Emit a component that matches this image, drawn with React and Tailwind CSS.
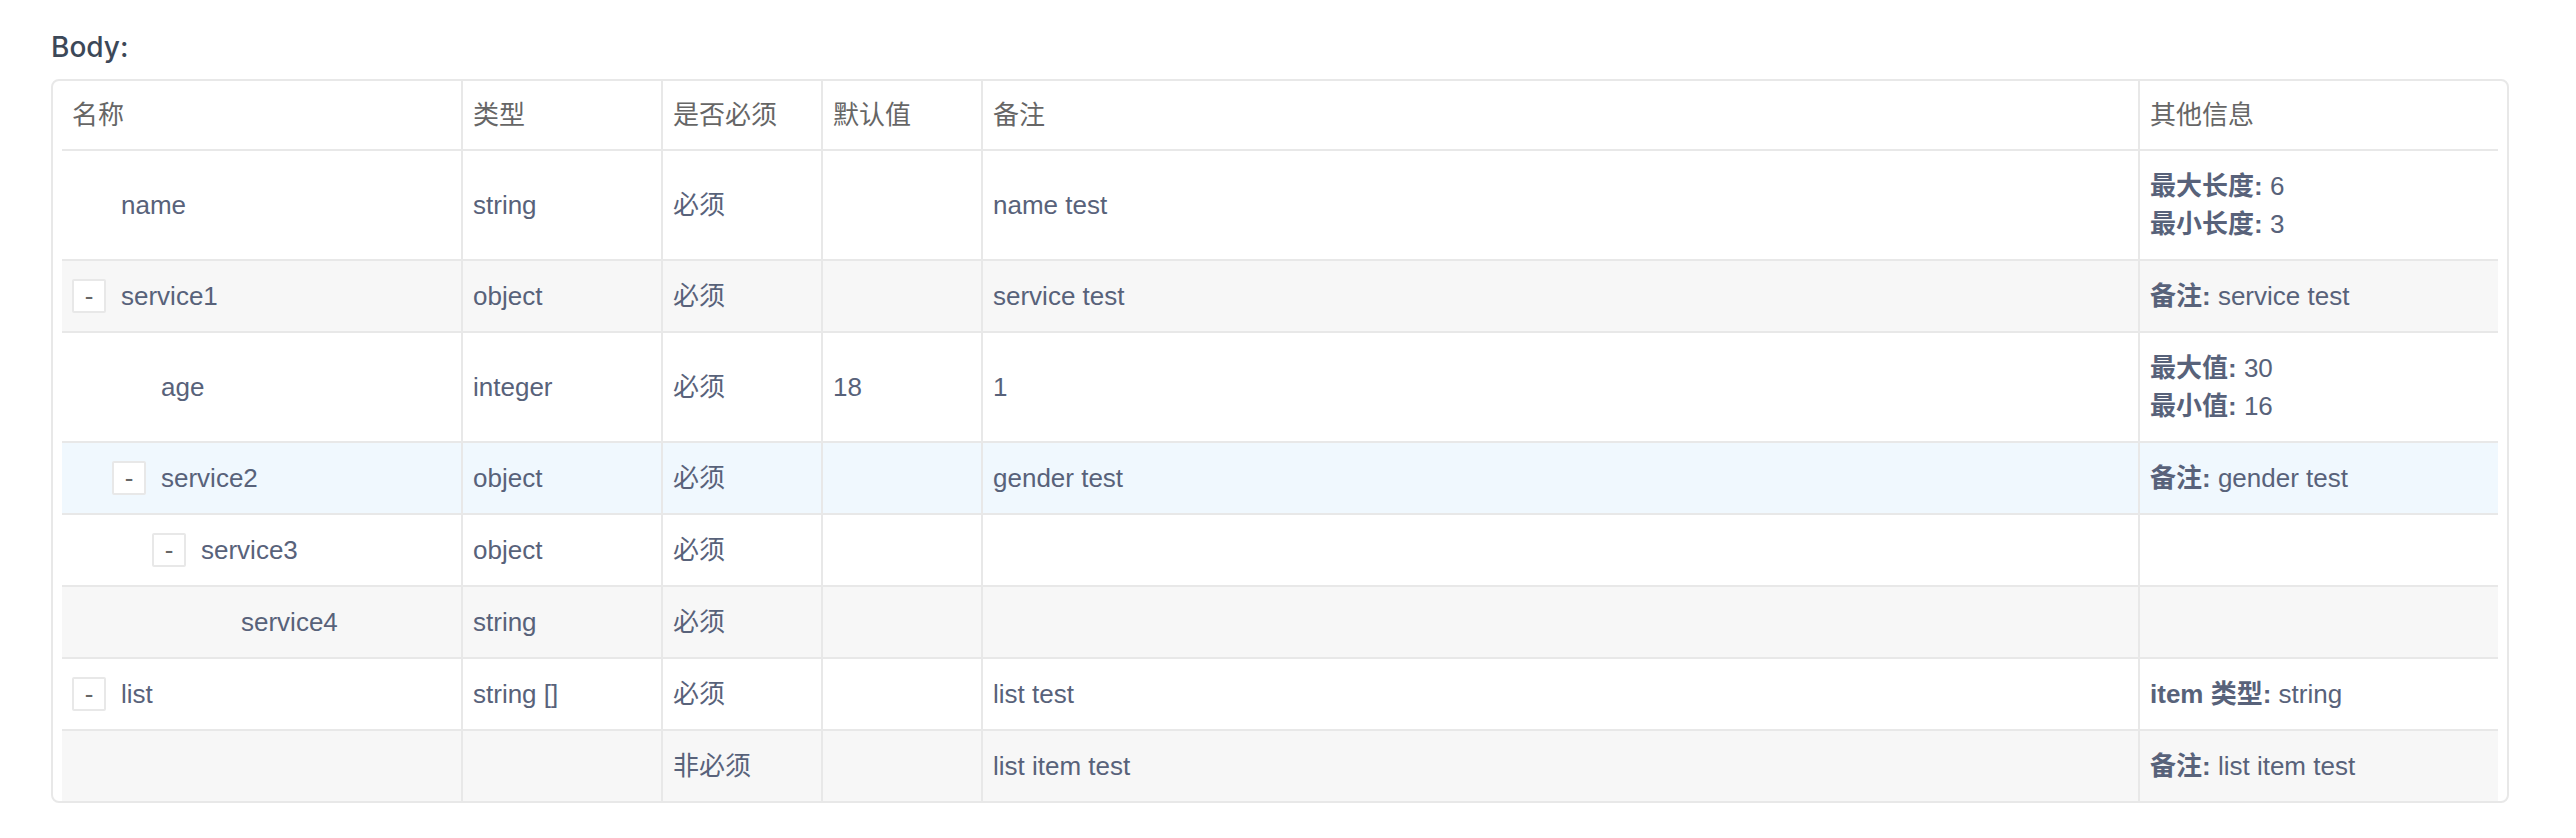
import React from "react";

const rows = [
    { name: "name", level: 0, expand: false, type: "string", req: "必须", def: "", desc: "name test", info: [["最大长度:", "6"], ["最小长度:", "3"]], bg: "bg-white" },
    { name: "service1", level: 0, expand: true, type: "object", req: "必须", def: "", desc: "service test", info: [["备注:", "service test"]], bg: "bg-[#f7f7f7]" },
    { name: "age", level: 1, expand: false, type: "integer", req: "必须", def: "18", desc: "1", info: [["最大值:", "30"], ["最小值:", "16"]], bg: "bg-white" },
    { name: "service2", level: 1, expand: true, type: "object", req: "必须", def: "", desc: "gender test", info: [["备注:", "gender test"]], bg: "bg-[#f0f8fe]" },
    { name: "service3", level: 2, expand: true, type: "object", req: "必须", def: "", desc: "", info: [], bg: "bg-white" },
    { name: "service4", level: 3, expand: false, type: "string", req: "必须", def: "", desc: "", info: [], bg: "bg-[#f7f7f7]" },
    { name: "list", level: 0, expand: true, type: "string []", req: "必须", def: "", desc: "list test", info: [["item 类型:", "string"]], bg: "bg-white" },
    { name: "", level: 1, expand: false, type: "", req: "非必须", def: "", desc: "list item test", info: [["备注:", "list item test"]], bg: "bg-[#f7f7f7]", noName: true },
];

const indent = ["pl-0", "pl-[40px]", "pl-[80px]", "pl-[120px]"];

const headers = ["名称", "类型", "是否必须", "默认值", "备注", "其他信息"];

const ExpandButton = () => (
    <span className="inline-flex items-center justify-center w-[34px] h-[34px] border-2 border-[#e8e8e8] bg-white text-[#666] text-[26px] leading-none rounded-[2px]">-</span>
);

const App = () => {
    return (
        <div className="min-h-screen bg-white pt-[27px] pl-[51px] font-['Liberation_Sans','Noto_Sans_CJK_SC',sans-serif]">
            <h3 className="font-['Inter','Noto_Sans_CJK_SC',sans-serif] text-[28px] leading-[40px] font-medium text-[#3c4858] mb-[12px]">Body:</h3>

            <div className="w-[2458px] border-2 border-[#e8e8e8] rounded-[8px] px-[9px] bg-white">
                <table className="w-full table-fixed border-separate border-spacing-0 text-[26px] leading-[38px]">
                    <colgroup>
                        <col className="w-[399px]" />
                        <col className="w-[200px]" />
                        <col className="w-[160px]" />
                        <col className="w-[160px]" />
                        <col />
                        <col className="w-[360px]" />
                    </colgroup>
                    <thead>
                        <tr>
                            {headers.map((h, i) => (
                                <th
                                    key={h}
                                    className={
                                        "text-left font-normal text-[#666] py-[15px] pl-[10px] border-b-2 border-[#e8e8e8] " +
                                        (i > 0 ? "border-l-2" : "")
                                    }
                                >
                                    {h}
                                </th>
                            ))}
                        </tr>
                    </thead>
                    <tbody className="text-[#58627a]">
                        {rows.map((r, idx) => {
                            const last = idx === rows.length - 1;
                            const cell = "align-middle py-[16px] pl-[10px] border-[#e8e8e8] " + (last ? "" : "border-b-2 ");
                            return (
                                <tr key={idx} className={r.bg}>
                                    <td className={cell}>
                                        {!r.noName && (
                                            <div className={"flex items-center gap-[15px] " + indent[r.level]}>
                                                {r.expand ? <ExpandButton /> : <span className="w-[34px] shrink-0" />}
                                                <span>{r.name}</span>
                                            </div>
                                        )}
                                    </td>
                                    <td className={cell + "border-l-2"}>{r.type}</td>
                                    <td className={cell + "border-l-2"}>{r.req}</td>
                                    <td className={cell + "border-l-2"}>{r.def}</td>
                                    <td className={cell + "border-l-2"}>{r.desc}</td>
                                    <td className={cell + "border-l-2"}>
                                        {r.info.map(([k, v]) => (
                                            <div key={k}>
                                                <span className="font-bold">{k}</span> {v}
                                            </div>
                                        ))}
                                    </td>
                                </tr>
                            );
                        })}
                    </tbody>
                </table>
            </div>
        </div>
    );
};

export default App;
